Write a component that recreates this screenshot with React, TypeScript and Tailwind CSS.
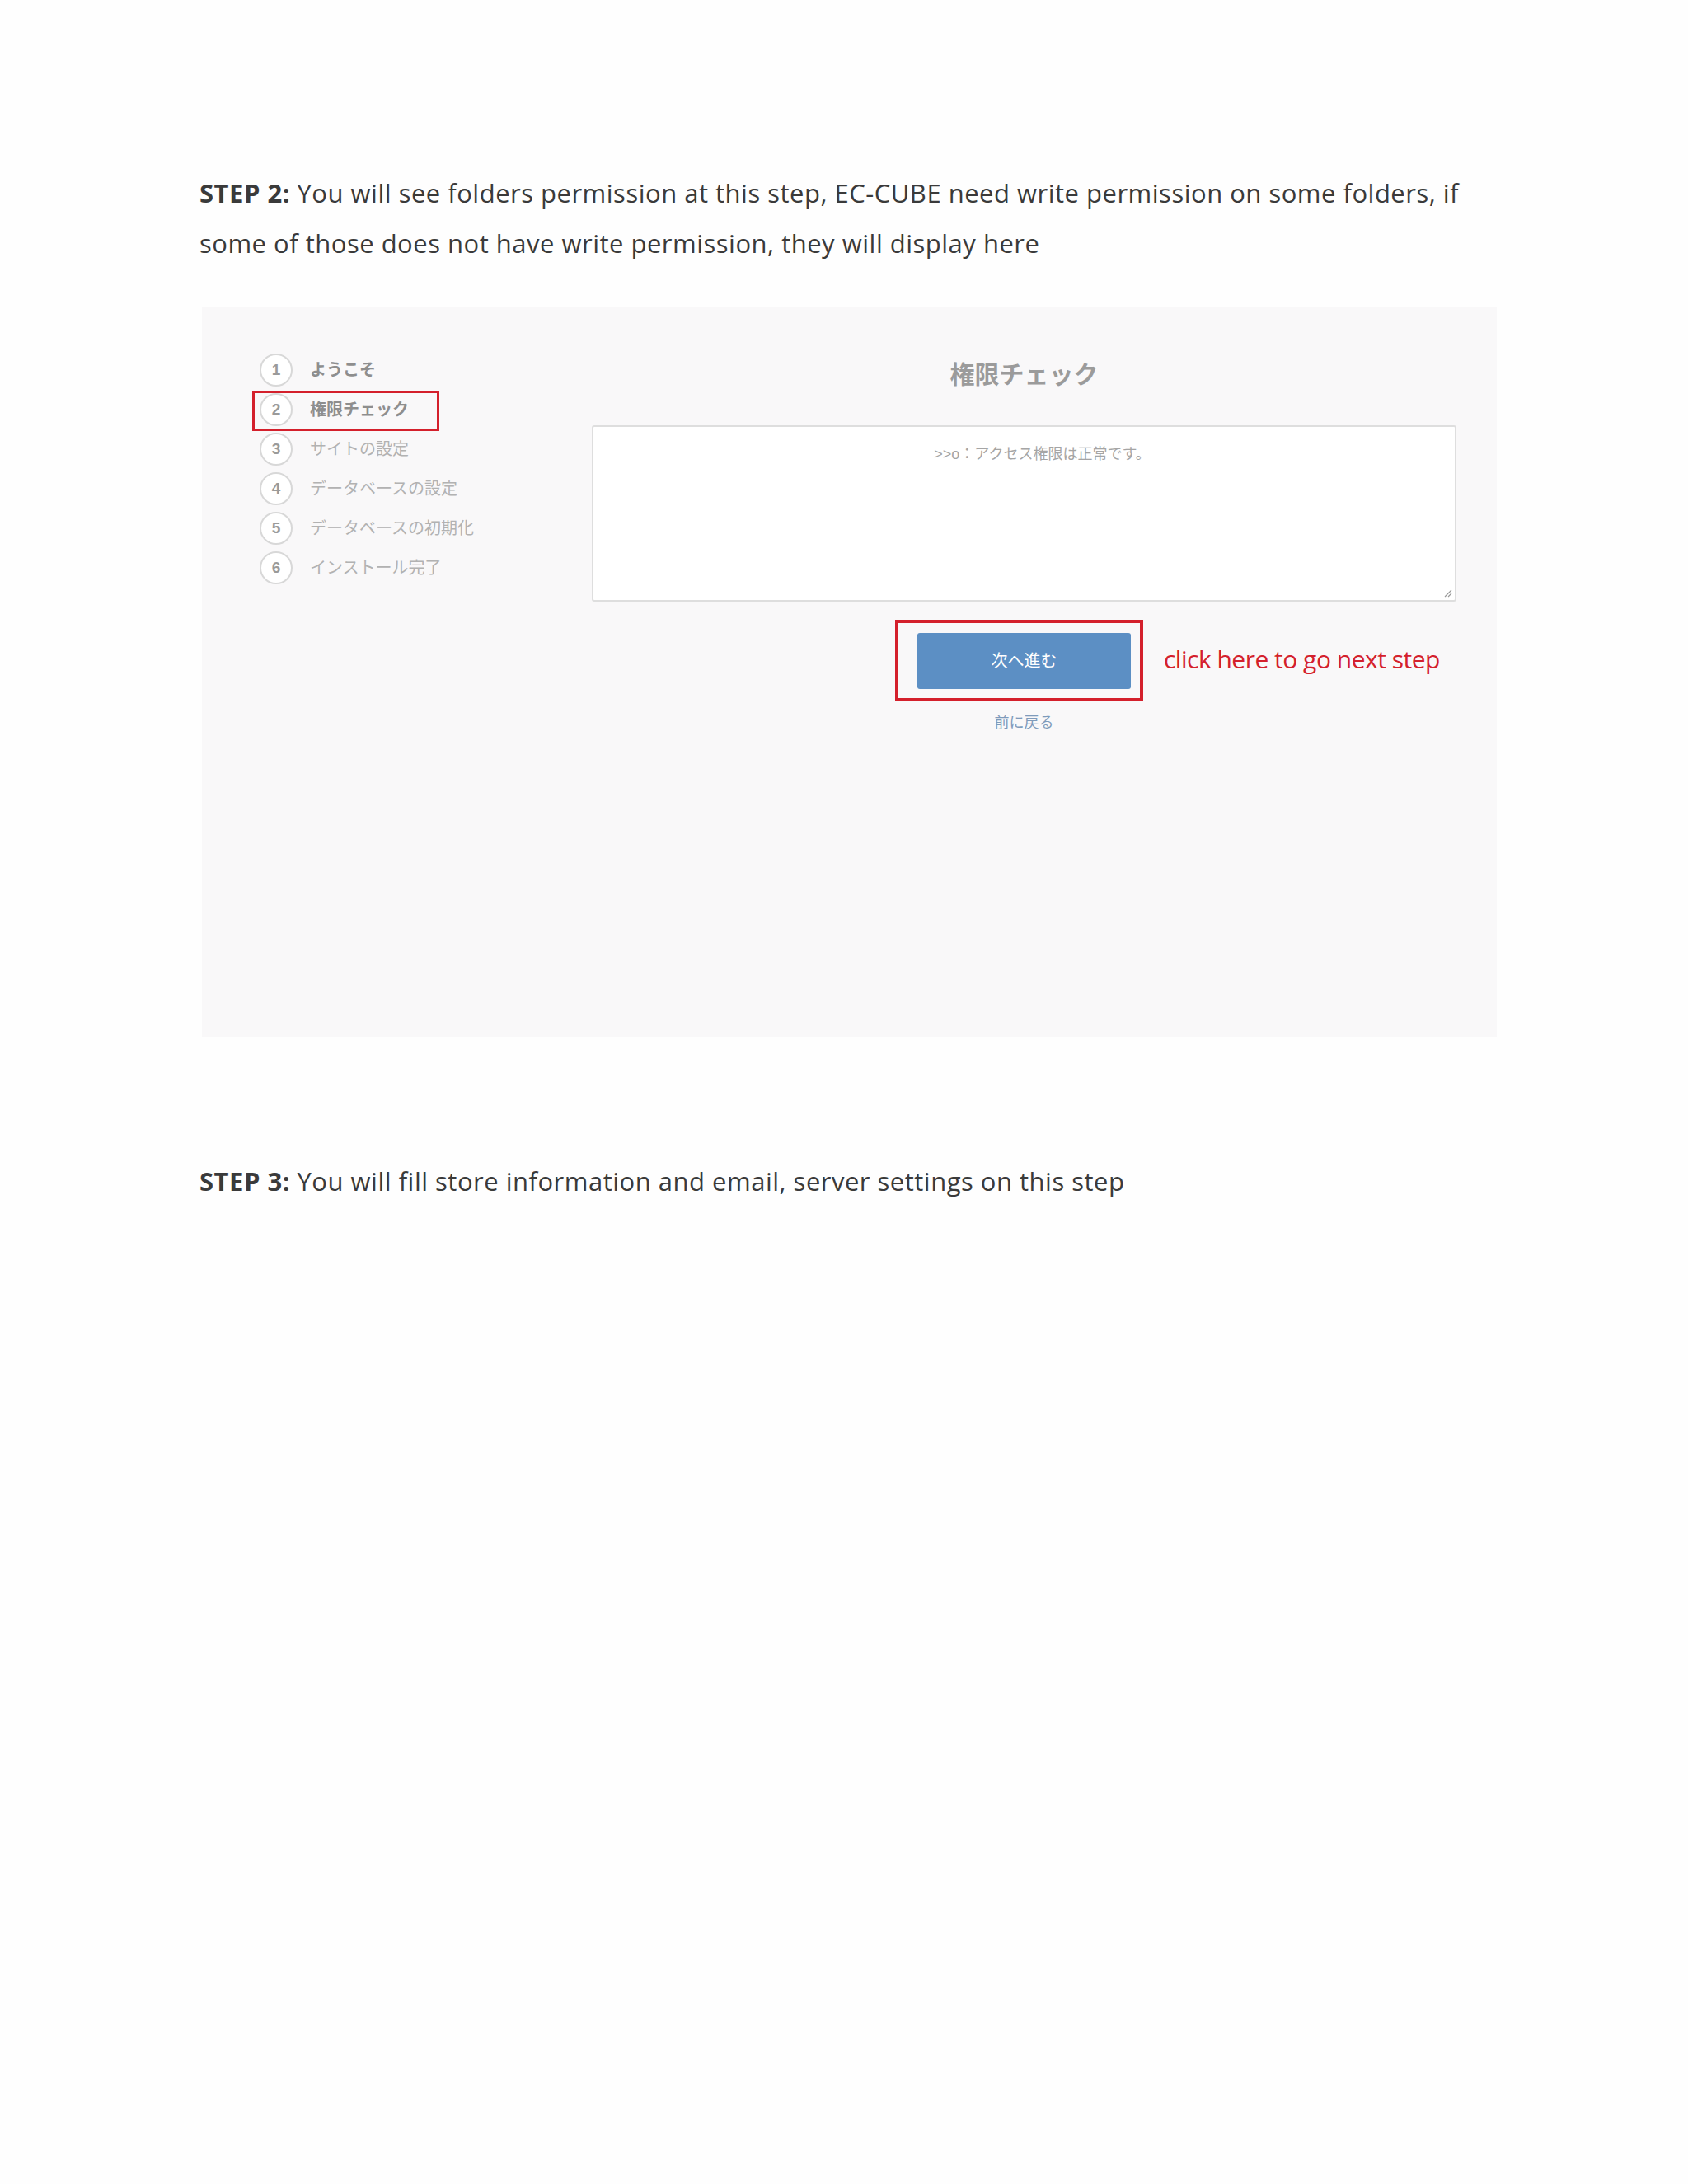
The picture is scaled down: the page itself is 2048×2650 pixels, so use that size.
const steps = [
  { n: 1, label: 'ようこそ', done: true },
  { n: 2, label: '権限チェック', done: true },
  { n: 3, label: 'サイトの設定', done: false },
  { n: 4, label: 'データベースの設定', done: false },
  { n: 5, label: 'データベースの初期化', done: false },
  { n: 6, label: 'インストール完了', done: false },
]

const jp = { fontFamily: '"Liberation Sans", "Noto Sans CJK JP", sans-serif' }

export default function App() {
  return (
    <div className="min-h-[2650px] w-full bg-[#fefefe]" style={{ fontFamily: '"Open Sans", "Noto Sans", sans-serif' }}>
      <div className="pl-[242px] pt-[204px] w-[1840px]">
        <p className="text-[31px] leading-[61px] text-[#3a3a3a] tracking-[0.5px]">
          <b className="font-bold">STEP 2:</b> You will see folders permission at this step, EC-CUBE need write permission on some folders, if some of those does not have write permission, they will display here
        </p>

        {/* installer screenshot */}
        <div className="ml-[3px] mt-[46px] w-[1571px] h-[886px] bg-[#f9f8f9] flex" style={jp}>
          <div className="relative pl-[70px] pt-[57px] w-[473px] shrink-0">
            <ul className="flex flex-col gap-[8px]">
              {steps.map(s => (
                <li key={s.n} className="flex items-center h-[40px]">
                  <span className="w-[40px] h-[40px] rounded-full border-2 border-[#d8d8d8] bg-white flex items-center justify-center text-[19px] font-bold text-[#9a9a9a]">
                    {s.n}
                  </span>
                  <span className={`ml-[21px] text-[20px] ${s.done ? 'font-bold text-[#8e8e8e]' : 'text-[#b2b2b2]'}`}>
                    {s.label}
                  </span>
                </li>
              ))}
            </ul>
            <div className="absolute left-[61px] top-[102px] w-[227px] h-[49px] border-[3px] border-[#d4202c]" />
          </div>

          <div className="w-[1049px] pt-[63px] flex flex-col items-center">
            <h2 className="text-[30px] leading-[40px] font-bold text-[#9b9b9b]">権限チェック</h2>
            <div className="mt-[41px] w-full h-[214px] bg-white border-2 border-[#dedede] rounded-[3px] pt-[20px] relative">
              <p className="text-center text-[18px] text-[#a5a5a5] pl-[44px]">&gt;&gt;o：アクセス権限は正常です。</p>
              <svg className="absolute right-[3px] bottom-[3px]" width="12" height="12" viewBox="0 0 12 12">
                <path d="M11 3 L3 11 M11 7 L7 11" stroke="#9a9a9a" strokeWidth="1.2" />
              </svg>
            </div>
            <div className="relative mt-[38px]">
              <button className="w-[259px] h-[68px] bg-[#5c8fc4] rounded-[3px] text-white text-[20px]">次へ進む</button>
              <div className="absolute left-[-27px] top-[-16px] w-[301px] h-[99px] border-[4px] border-[#d4202c]" />
              <span
                className="absolute left-[299px] top-[9px] whitespace-nowrap text-[30px] text-[#d4202c]"
                style={{ fontFamily: '"Open Sans", sans-serif', letterSpacing: '-0.5px' }}
              >
                click here to go next step
              </span>
            </div>
            <a className="mt-[29px] text-[18px] leading-[24px] text-[#7f9bbb]">前に戻る</a>
          </div>
        </div>

        <p className="mt-[145px] text-[31px] leading-[61px] text-[#3a3a3a] tracking-[0.5px]">
          <b className="font-bold">STEP 3:</b> You will fill store information and email, server settings on this step
        </p>
      </div>
    </div>
  )
}
